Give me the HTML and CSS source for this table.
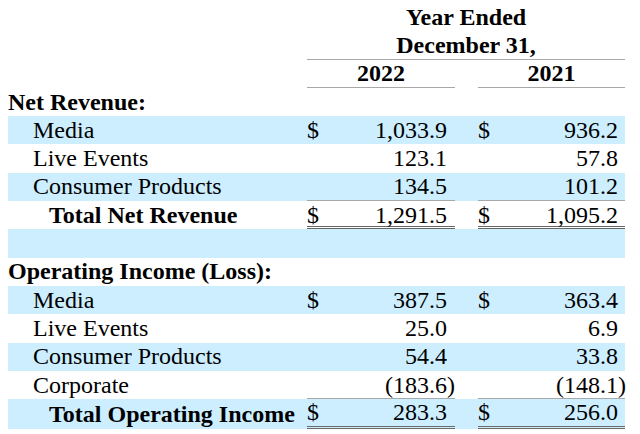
FILE: index.html
```html
<!DOCTYPE html>
<html>
<head>
<meta charset="utf-8">
<link rel="stylesheet" href="styles.css">
</head>
<body>
<table class="fin">
  <colgroup>
    <col class="c-label">
    <col class="c-cur">
    <col class="c-amt">
    <col class="c-par">
    <col class="c-gap">
    <col class="c-cur">
    <col class="c-amt">
    <col class="c-par2">
  </colgroup>
  <thead>
    <tr>
      <th></th>
      <th colspan="7" class="hd">Year Ended</th>
    </tr>
    <tr>
      <th></th>
      <th colspan="7" class="hd rule">December 31,</th>
    </tr>
    <tr>
      <th></th>
      <th colspan="3" class="hd rule">2022</th>
      <th></th>
      <th colspan="3" class="hd rule">2021</th>
    </tr>
  </thead>
  <tbody>
    <tr>
      <td class="sec" colspan="8">Net Revenue:</td>
    </tr>
    <tr class="blue">
      <td class="item">Media</td>
      <td class="cur">$</td><td class="amt">1,033.9</td><td></td>
      <td></td>
      <td class="cur">$</td><td class="amt">936.2</td><td></td>
    </tr>
    <tr>
      <td class="item">Live Events</td>
      <td></td><td class="amt">123.1</td><td></td>
      <td></td>
      <td></td><td class="amt">57.8</td><td></td>
    </tr>
    <tr class="blue">
      <td class="item">Consumer Products</td>
      <td class="rule"></td><td class="amt rule">134.5</td><td class="rule"></td>
      <td></td>
      <td class="rule"></td><td class="amt rule">101.2</td><td class="rule"></td>
    </tr>
    <tr>
      <td class="total">Total Net Revenue</td>
      <td class="cur dbl">$</td><td class="amt dbl">1,291.5</td><td class="dbl"></td>
      <td></td>
      <td class="cur dbl">$</td><td class="amt dbl">1,095.2</td><td class="dbl"></td>
    </tr>
    <tr class="blue">
      <td colspan="8"></td>
    </tr>
    <tr>
      <td class="sec" colspan="8">Operating Income (Loss):</td>
    </tr>
    <tr class="blue">
      <td class="item">Media</td>
      <td class="cur">$</td><td class="amt">387.5</td><td></td>
      <td></td>
      <td class="cur">$</td><td class="amt">363.4</td><td></td>
    </tr>
    <tr>
      <td class="item">Live Events</td>
      <td></td><td class="amt">25.0</td><td></td>
      <td></td>
      <td></td><td class="amt">6.9</td><td></td>
    </tr>
    <tr class="blue">
      <td class="item">Consumer Products</td>
      <td></td><td class="amt">54.4</td><td></td>
      <td></td>
      <td></td><td class="amt">33.8</td><td></td>
    </tr>
    <tr>
      <td class="item">Corporate</td>
      <td class="rule"></td><td class="amt rule">(183.6</td><td class="par rule">)</td>
      <td></td>
      <td class="rule"></td><td class="amt rule">(148.1</td><td class="par rule">)</td>
    </tr>
    <tr class="blue last">
      <td class="total">Total Operating Income</td>
      <td class="cur under">$</td><td class="amt under">283.3</td><td class="under"></td>
      <td></td>
      <td class="cur under">$</td><td class="amt under">256.0</td><td class="under"></td>
    </tr>
  </tbody>
</table>
</body>
</html>
```

FILE: styles.css
```css
html, body {
  margin: 0;
  padding: 0;
  background: #ffffff;
}

body {
  padding: 3px 0 0 8px;
  font-family: "Liberation Serif", "Times New Roman", serif;
  font-size: 24px;
  color: #000000;
}

.fin {
  border-collapse: separate;
  border-spacing: 0;
  table-layout: fixed;
  width: 617px;
}

.c-label { width: 299px; }
.c-cur { width: 20px; }
.c-amt { width: 120px; }
.c-par { width: 8px; }
.c-gap { width: 23px; }
.c-par2 { width: 7px; }

.fin tr {
  height: 28.3px;
}

.fin th,
.fin td {
  padding: 0;
  line-height: 27px;
  white-space: nowrap;
  vertical-align: middle;
}

.fin th {
  font-weight: bold;
}

.fin .hd {
  text-align: center;
}

.fin .rule {
  box-shadow: inset 0 -1px 0 #a8a8a8;
}

.fin .blue {
  background: #cceeff;
}

.fin .sec {
  font-weight: bold;
  text-align: left;
}

.fin .item {
  padding-left: 25px;
}

.fin .total {
  padding-left: 41px;
  font-weight: bold;
}

.fin .cur {
  text-align: left;
}

.fin .amt {
  text-align: right;
}

.fin .par {
  text-align: left;
}

.fin .dbl {
  background:
    linear-gradient(#666666, #666666) left bottom / 100% 1px no-repeat,
    linear-gradient(#666666, #666666) left calc(100% - 2px) / 100% 1px no-repeat;
}

.fin .under {
  border-bottom: 3px double #6a6a6a;
}
```
